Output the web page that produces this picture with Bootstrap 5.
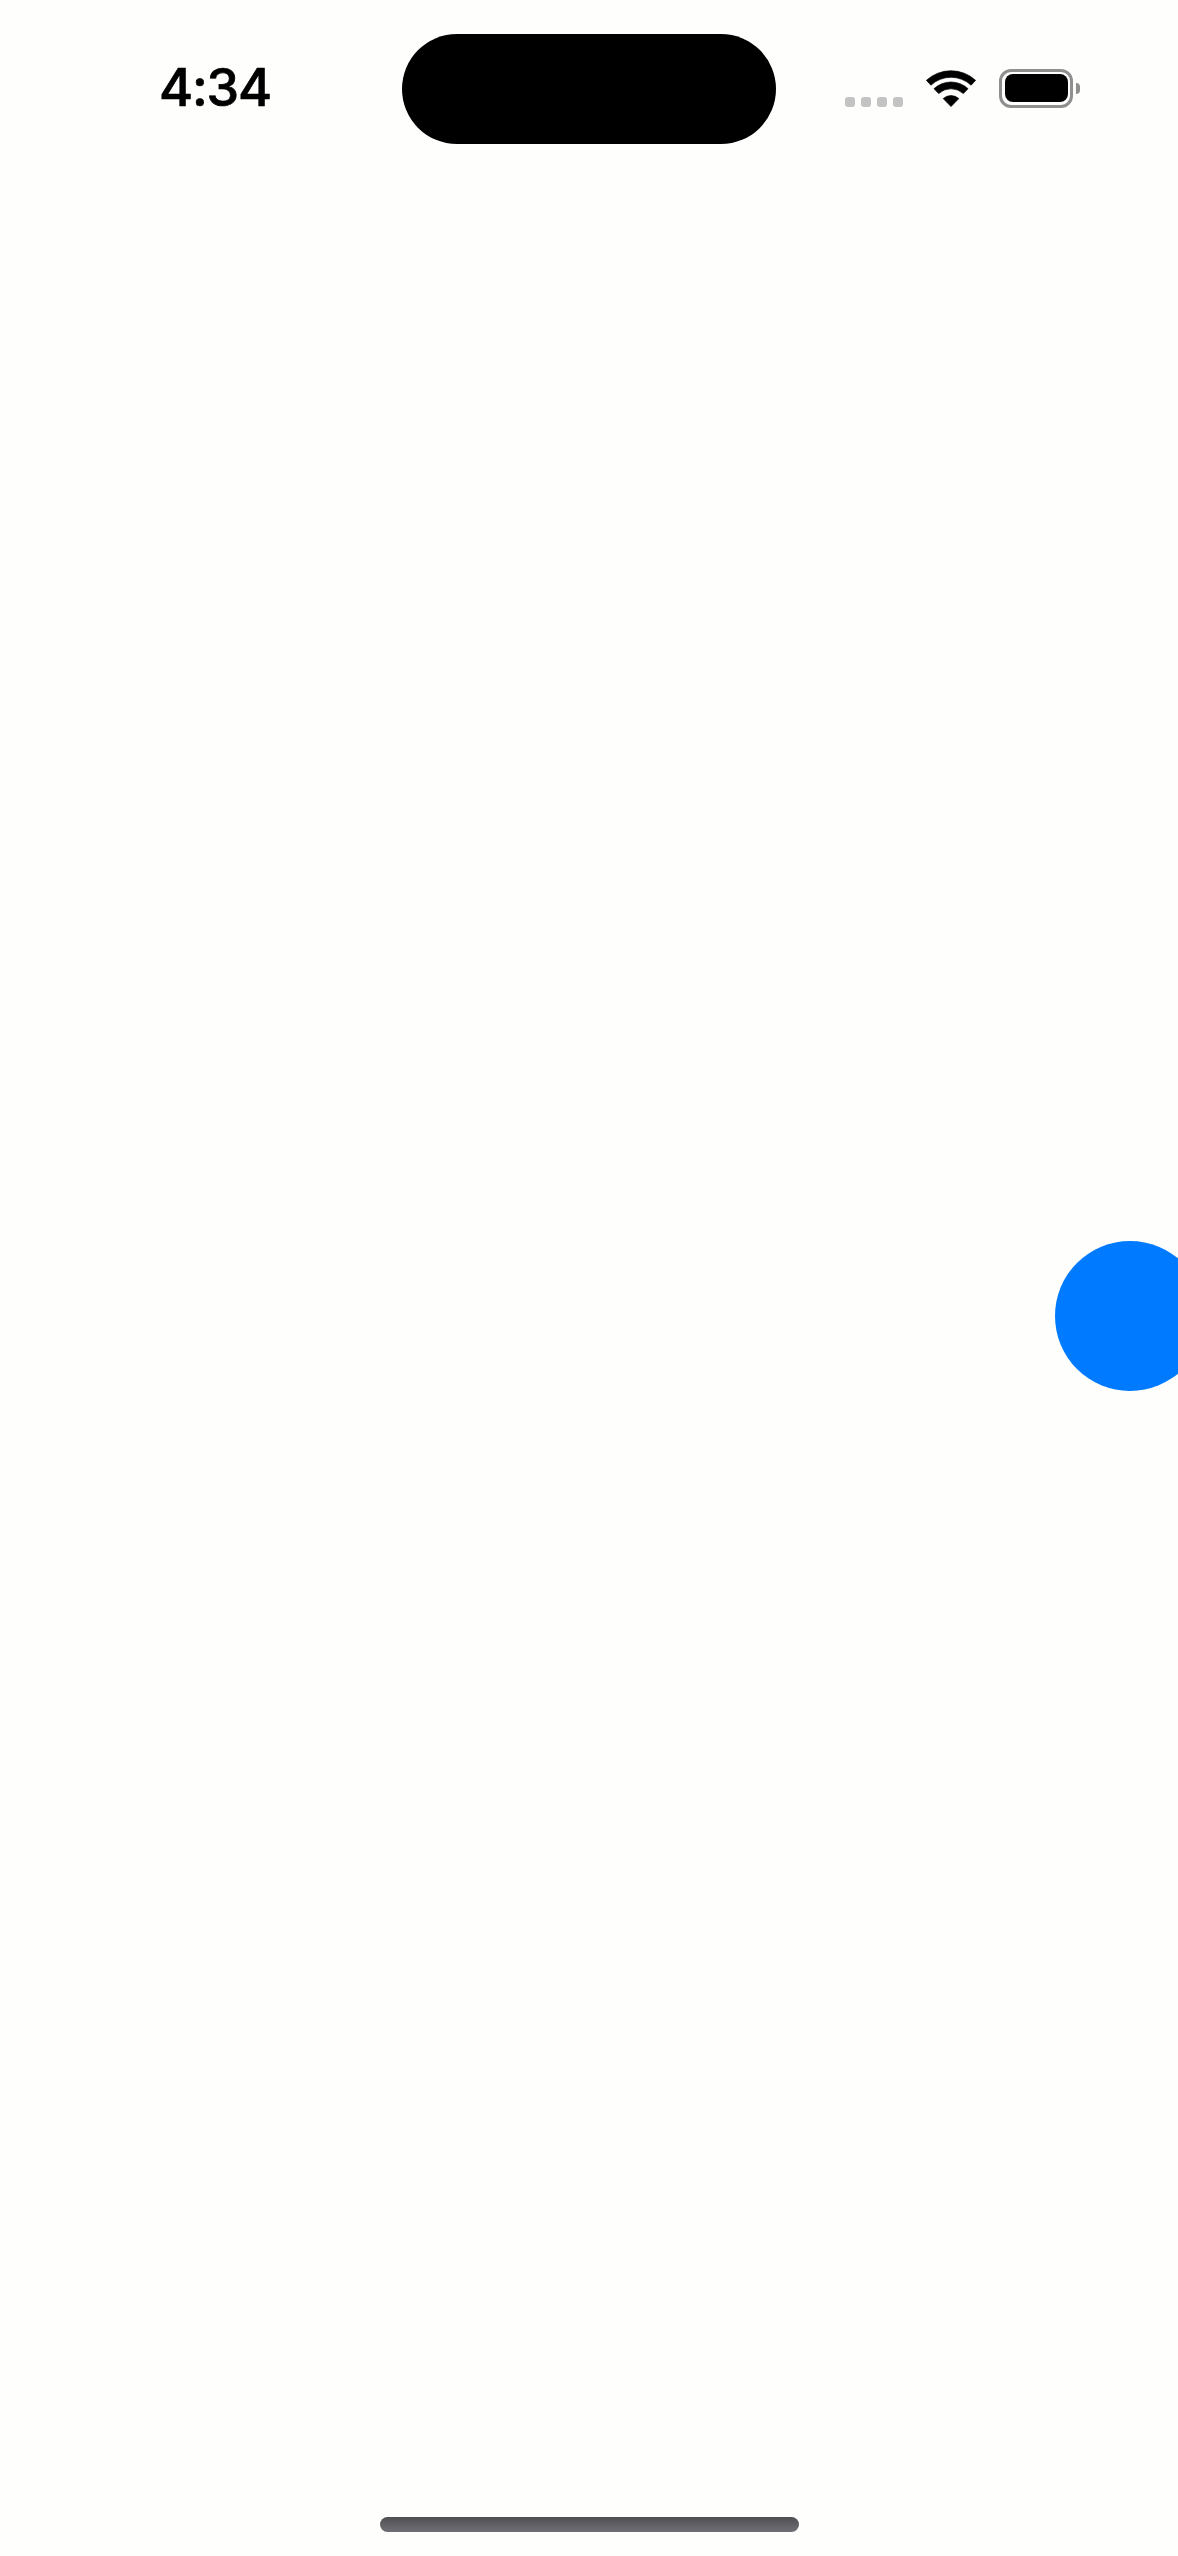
<!DOCTYPE html>
<html lang="en">
<head>
<meta charset="utf-8">
<title>Status</title>
<link href="https://cdn.jsdelivr.net/npm/bootstrap@5.3.0/dist/css/bootstrap.min.css" rel="stylesheet">
<style>
html, body { height: 100%; }
.phone-screen { height: 100vh; background: #fefefd; overflow: hidden; font-family: Inter, "Liberation Sans", sans-serif; }
.status-row { margin-top: 34px; height: 110px; }
.time-side { padding-left: 159px; }
.time-text { font-size: 52px; font-weight: 500; line-height: 1; letter-spacing: -1.2px; color: #000; margin-top: -2px; -webkit-text-stroke: .7px #000; }
.island { width: 374px; height: 110px; background: #000; }
.indicator-side { padding-left: 69px; height: 39px; margin-top: -2px; }
.signal-dots { gap: 6px; width: 58px; margin-right: 23px; padding-bottom: 1px; }
.signal-dot { width: 10px; height: 10px; border-radius: 3px; background: #c3c3c3; }
.wifi-icon { width: 50px; height: 37px; margin-right: 23px; margin-bottom: 1px; display: block; overflow: visible; }
.battery-body { width: 74px; height: 39px; border: 3.5px solid #8f8f8f; border-radius: 12px; padding: 2.5px; background: #fff; }
.battery-fill { height: 100%; background: #000; border-radius: 8px; }
.battery-tip { width: 4px; height: 11px; margin-left: 3px; margin-bottom: 14px; background: #8f8f8f; border-radius: 0 4px 4px 0; }
.float-dot { width: 150px; height: 150px; left: 1055px; top: 1241px; background: #007aff; }
.home-row { padding-bottom: 24px; }
.home-bar { width: 419px; height: 15px; background: linear-gradient(#4f4f53, #6f6f75); }
</style>
</head>
<body>
<div class="phone-screen position-relative d-flex flex-column justify-content-between">
  <div class="status-row d-flex align-items-center">
    <div class="time-side flex-fill w-25"><div class="time-text">4:34</div></div>
    <div class="island rounded-pill flex-shrink-0"></div>
    <div class="indicator-side flex-fill w-25 d-flex align-items-end">
      <div class="signal-dots d-flex flex-shrink-0">
        <span class="signal-dot flex-shrink-0"></span><span class="signal-dot flex-shrink-0"></span><span class="signal-dot flex-shrink-0"></span><span class="signal-dot flex-shrink-0"></span>
      </div>
      <svg class="wifi-icon flex-shrink-0" viewBox="0 0 50 37" xmlns="http://www.w3.org/2000/svg" fill="#000" stroke="#000" stroke-width=".7" stroke-linejoin="round">
        <path d="M0.4 10.3A36.5 36.5 0 0 1 49.6 10.3L45.1 15.2A29.5 29.5 0 0 0 4.9 15.2Z"/>
        <path d="M8 18.7A25 25 0 0 1 42 18.7L37.3 23.6A18 18 0 0 0 12.7 23.6Z"/>
        <path d="M17.2 28.6A11.5 11.5 0 0 1 32.8 28.6L25 36.6Z"/>
      </svg>
      <div class="battery-body flex-shrink-0"><div class="battery-fill"></div></div>
      <div class="battery-tip flex-shrink-0"></div>
    </div>
  </div>
  <div class="float-dot rounded-circle position-absolute"></div>
  <div class="home-row d-flex justify-content-center">
    <div class="home-bar rounded-pill"></div>
  </div>
</div>
<script src="https://cdn.jsdelivr.net/npm/bootstrap@5.3.0/dist/js/bootstrap.bundle.min.js"></script>
</body>
</html>
